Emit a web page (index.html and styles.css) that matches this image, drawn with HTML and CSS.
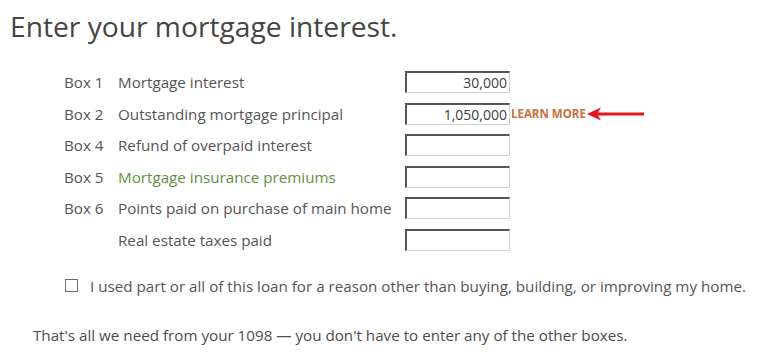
FILE: index.html
```html
<!DOCTYPE html>
<html>
<head>
<meta charset="utf-8">
<link rel="stylesheet" href="styles.css">
</head>
<body>
<main class="page">
  <h1 class="title">Enter your mortgage interest.</h1>
  <div class="form">
    <span class="box">Box 1</span><span class="label">Mortgage interest</span><div class="field"><span class="input">30,000</span></div>
    <span class="box">Box 2</span><span class="label">Outstanding mortgage principal</span><div class="field"><span class="input">1,050,000</span><span class="learn">LEARN MORE</span><svg class="arrow" width="60" height="14" viewBox="0 0 60 14"><path d="M0 7 L14 0.5 L11 5.5 L57 5.5 L57 8.5 L11 8.5 L14 13.5 Z" fill="#e3161e"/></svg></div>
    <span class="box">Box 4</span><span class="label">Refund of overpaid interest</span><div class="field"><span class="input"></span></div>
    <span class="box">Box 5</span><span class="label green">Mortgage insurance premiums</span><div class="field"><span class="input"></span></div>
    <span class="box">Box 6</span><span class="label">Points paid on purchase of main home</span><div class="field"><span class="input"></span></div>
    <span class="box"></span><span class="label">Real estate taxes paid</span><div class="field"><span class="input"></span></div>
  </div>
  <label class="check"><span class="cbox"></span><span>I used part or all of this loan for a reason other than buying, building, or improving my home.</span></label>
  <p class="note">That's all we need from your 1098 — you don't have to enter any of the other boxes.</p>
</main>
</body>
</html>
```
FILE: styles.css
```css
html, body { margin: 0; padding: 0; background: #fff; }
body { font-family: "Open Sans", "Noto Sans", sans-serif; color: #4d4d4d; }
.page { width: 768px; height: 356px; overflow: hidden; }
.title { margin: 0; padding: 7px 0 0 10px; font-size: 28.2px; font-weight: 400; line-height: 38px; color: #454545; }
.form {
  display: grid;
  grid-template-columns: 54px 287px auto;
  grid-auto-rows: 22px;
  row-gap: 9.5px;
  margin: 26px 0 0 64px;
  font-size: 15.2px;
  align-items: center;
}
.box, .label { line-height: 22px; white-space: nowrap; color: #555; }
.green { color: #5f9142; }
.field { display: flex; align-items: center; height: 22px; }
.input {
  box-sizing: border-box;
  width: 105px; height: 22px;
  border-style: solid;
  border-width: 2px 1px 1px 2px;
  border-color: #555 #d2d2d2 #d2d2d2 #555;
  text-align: right;
  padding-right: 2px;
  line-height: 19px;
  font-size: 14px;
  color: #3c3c3c;
}
.learn { font-size: 11.5px; font-weight: 700; color: #c8703a; margin-left: 1px; }
.arrow { margin-left: 1px; }
.check { display: flex; align-items: center; margin: 25px 0 0 65px; font-size: 15.2px; color: #555; }
.cbox { box-sizing: border-box; width: 13px; height: 13px; border: 1px solid #6b6b6b; margin-right: 12px; }
.note { margin: 29px 0 0 33px; font-size: 15.2px; color: #4d4d4d; }
```
